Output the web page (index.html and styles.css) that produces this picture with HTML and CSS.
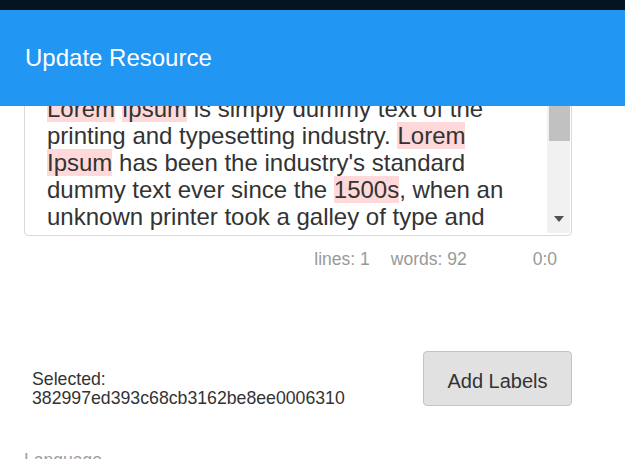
FILE: index.html
```html
<!DOCTYPE html>
<html lang="en">

<head>
  <meta charset="UTF-8">
  <meta name="viewport" content="width=device-width, initial-scale=1.0">
  <title>Update Resource</title>
  <link rel="stylesheet" href="styles.css">
</head>

<body>
  <header class="appbar">
    <div class="statusbar"></div>
    <div class="toolbar">
      <h1 class="toolbar-title">Update Resource</h1>
    </div>
  </header>

  <main class="page">
    <div class="editor">
      <div class="editor-text">
        <span class="mark">Lorem</span> <span class="mark">Ipsum</span> is simply dummy text of the printing and
        typesetting industry. <span class="mark">Lorem</span> <span class="mark">Ipsum</span> has been the industry's
        standard dummy text ever since the <span class="mark">1500s</span>, when an unknown printer took a galley of
        type and scrambled it to make a type specimen book. It has survived not only five centuries, but also the leap
        into electronic typesetting, remaining essentially unchanged.
      </div>
      <div class="scrollbar">
        <div class="scroll-thumb"></div>
        <div class="scroll-arrow"></div>
      </div>
    </div>

    <div class="editor-status">
      <span class="stat-lines">lines: 1</span>
      <span class="stat-words">words: 92</span>
      <span class="stat-cursor">0:0</span>
    </div>

    <div class="selection-row">
      <div class="selected">
        Selected:<br>
        382997ed393c68cb3162be8ee0006310
      </div>
      <button type="button" class="btn-labels">Add Labels</button>
    </div>

    <label class="field-label">Language</label>
  </main>
</body>

</html>
```

FILE: styles.css
```css
html,
body {
  overflow: hidden;
}

body {
  margin: 0;
  font-family: 'Liberation Sans', Arial, sans-serif;
  color: #333;
  background-color: #fff;
}

.appbar {
  position: fixed;
  top: 0;
  left: 0;
  right: 0;
  z-index: 10;
}

.statusbar {
  height: 10px;
  background-color: #06141f;
}

.toolbar {
  height: 96px;
  display: flex;
  align-items: center;
  padding-left: 25px;
  background-color: #2196f3;
}

.toolbar-title {
  margin: 0;
  font-size: 24px;
  font-weight: normal;
  color: #fff;
}

.page {
  padding: 90px 53px 0 24px;
}

/* Editor box */
.editor {
  display: flex;
  height: 144px;
  border: 1px solid #dadada;
  border-radius: 4px;
  overflow: hidden;
}

.editor-text {
  flex: 1;
  padding: 4px 30px 5px 22px;
  font-size: 24px;
  line-height: 27px;
  color: #333;
  overflow: hidden;
}

.mark {
  background-color: #ffd9d9;
}

.scrollbar {
  position: relative;
  width: 23px;
  margin-right: 1px;
  margin-bottom: 2px;
  background-color: #f1f1f1;
}

.scroll-thumb {
  height: 50px;
  margin-left: 2px;
  background-color: #c1c1c1;
}

.scroll-arrow {
  position: absolute;
  left: 7px;
  bottom: 11px;
  width: 0;
  height: 0;
  border-left: 5px solid transparent;
  border-right: 5px solid transparent;
  border-top: 6px solid #505050;
}

/* Counters under the editor */
.editor-status {
  display: flex;
  justify-content: flex-end;
  margin-top: 13px;
  padding-right: 15px;
  font-size: 17.5px;
  line-height: 20px;
  color: #999;
}

.stat-lines {
  margin-right: 21px;
}

.stat-words {
  margin-right: 66px;
}

.selection-row {
  display: flex;
  justify-content: space-between;
  align-items: flex-end;
  margin-top: 82px;
  padding-left: 8px;
}

.selected {
  font-size: 17.7px;
  line-height: 19px;
  color: #333;
}

.btn-labels {
  width: 149px;
  height: 55px;
  margin-bottom: 2px;
  padding: 5px 0 0;
  border: 1px solid #c4c4c4;
  border-radius: 4px;
  background-color: #e1e1e1;
  font-family: inherit;
  font-size: 20px;
  color: #333;
}

.field-label {
  display: block;
  margin-top: 42px;
  font-size: 17.5px;
  color: #9e9e9e;
}
```
